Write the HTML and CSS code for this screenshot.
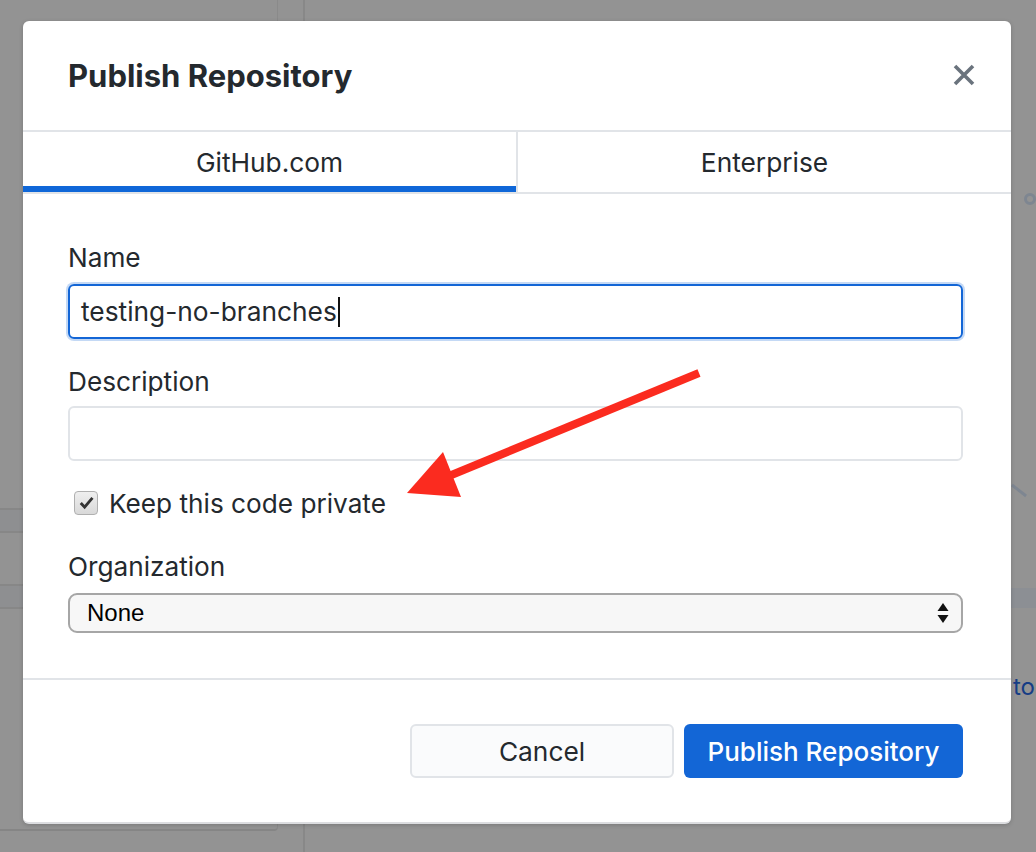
FILE: index.html
```html
<!DOCTYPE html>
<html lang="en">
<head>
<meta charset="utf-8">
<title>Publish Repository</title>
<link rel="stylesheet" href="styles.css">
</head>
<body>
<div class="app">
  <aside class="sidebar">
    <div class="side-panel">
      <div class="side-row"></div>
      <div class="side-gap"></div>
      <div class="side-row"></div>
    </div>
  </aside>
  <main class="main">
    <span class="ring"></span>
    <span class="dash"></span>
    <div class="band"></div>
    <div class="link-row">to</div>
  </main>
</div>

<div class="dialog">
  <header class="dialog-header">
    <h1 class="dialog-title">Publish Repository</h1>
    <button class="close" type="button" aria-label="Close">
      <svg viewBox="0 0 22 22" width="22" height="22"><path d="M2 2 L20 20 M20 2 L2 20" stroke="#6a737d" stroke-width="3.6" stroke-linecap="butt" fill="none"/></svg>
    </button>
  </header>

  <nav class="tabs">
    <div class="tab tab-active">GitHub.com</div>
    <div class="tab">Enterprise</div>
  </nav>

  <div class="form">
    <div class="field">
      <div class="label">Name</div>
      <div class="input input-focused"><span>testing-no-branches</span><span class="caret"></span></div>
    </div>
    <div class="field">
      <div class="label label-tight">Description</div>
      <div class="input"></div>
    </div>
    <div class="check-row">
      <span class="checkbox">
        <svg viewBox="0 0 16 16" width="17" height="17"><path d="M1.6 8.4 L3.6 6.6 L6.2 9.4 L12.6 1.8 L14.6 3.6 L6.3 13.4 Z" fill="#333333"/></svg>
      </span>
      <span class="check-label">Keep this code private</span>
    </div>
    <div class="field">
      <div class="label">Organization</div>
      <div class="select">
        <span>None</span>
        <svg viewBox="0 0 12 22" width="12" height="22"><path d="M6 1 L11.5 9 L0.5 9 Z M0.5 13 L11.5 13 L6 21 Z" fill="#111"/></svg>
      </div>
    </div>
  </div>

  <footer class="dialog-footer">
    <button class="btn btn-cancel" type="button">Cancel</button>
    <button class="btn btn-primary" type="button">Publish Repository</button>
  </footer>
</div>

<svg class="annotation" viewBox="0 0 1036 852" width="1036" height="852">
  <line x1="699" y1="373" x2="449" y2="476" stroke="#fb2b1f" stroke-width="8"/>
  <polygon points="407,493 443,452 461,497" fill="#fb2b1f"/>
</svg>
</body>
</html>
```

FILE: styles.css
```css
* { box-sizing: border-box; }

html, body {
  margin: 0;
  padding: 0;
  width: 1036px;
  height: 852px;
  overflow: hidden;
}

body {
  position: relative;
  background: #939393;
  font-family: Inter, "Open Sans", "Liberation Sans", sans-serif;
  color: #24292e;
}

/* ---------- dimmed app behind the modal ---------- */
.app {
  display: flex;
  height: 852px;
}

.sidebar {
  width: 305px;
  flex: none;
  border-right: 2px solid #888888;
}

.side-panel {
  width: 278px;
  height: 831px;
  padding-top: 508px;
  border-right: 1px solid #8a8a8a;
  border-bottom: 2px solid #858585;
  border-bottom-right-radius: 4px;
}

.side-row {
  height: 25px;
  background: #8e8f91;
  border-top: 2px solid #878787;
  border-bottom: 2px solid #878787;
}

.side-gap { height: 51px; }

.main {
  flex: 1;
  display: flex;
  flex-direction: column;
  align-items: flex-end;
  padding-top: 193px;
}

.ring {
  width: 12px;
  height: 12px;
  border: 3px solid #7e8691;
  border-radius: 50%;
}

.dash {
  width: 18px;
  height: 3px;
  background: #7e8691;
  transform: rotate(38deg);
  margin-top: 284px;
  margin-right: 8px;
}

.band {
  align-self: stretch;
  height: 20px;
  margin-top: 96px;
  background: #8c8f94;
}

.link-row {
  align-self: stretch;
  margin-top: 64px;
  padding-left: 708px;
  white-space: nowrap;
  font-size: 24px;
  color: #163d85;
}

/* ---------- modal ---------- */
.dialog {
  position: absolute;
  left: 23px;
  top: 21px;
  width: 988px;
  height: 803px;
  background: #ffffff;
  border-radius: 6px;
  border-bottom: 2px solid #dcdde0;
  box-shadow: 0 1px 4px rgba(0, 0, 0, 0.18);
  display: flex;
  flex-direction: column;
  overflow: hidden;
}

.dialog-header {
  height: 111px;
  flex: none;
  display: flex;
  align-items: center;
  justify-content: space-between;
  padding: 0 36px 0 45px;
  border-bottom: 2px solid #e1e4e8;
}

.dialog-title {
  margin: 0;
  font-size: 31px;
  font-weight: 700;
  color: #24292e;
}

.close {
  border: 0;
  background: none;
  padding: 0;
  width: 22px;
  height: 22px;
  display: flex;
  margin-top: -2px;
}

.tabs {
  display: flex;
  height: 62px;
  flex: none;
  border-bottom: 2px solid #e1e4e8;
}

.tab {
  flex: 1;
  display: flex;
  align-items: center;
  justify-content: center;
  font-size: 26.3px;
  color: #24292e;
}

.tab + .tab { border-left: 2px solid #e1e4e8; }

.tab-active {
  border-bottom: 6px solid #0f67d8;
  padding-top: 6px;
}

.form {
  flex: 1;
  display: flex;
  flex-direction: column;
  padding: 49px 48px 0 45px;
  border-bottom: 2px solid #e1e4e8;
}

.field { display: flex; flex-direction: column; }

.label {
  font-size: 26.2px;
  line-height: 30px;
  margin-bottom: 11px;
}

.label-tight { margin-bottom: 9px; }

.field + .field { margin-top: 28px; }

.input {
  height: 55px;
  border: 2px solid #e1e4e8;
  border-radius: 6px;
  display: flex;
  align-items: center;
  padding-left: 11px;
  font-size: 26.3px;
  color: #24292e;
}

.input-focused {
  border-color: #1366d6;
  box-shadow: 0 0 0 2px rgba(19, 102, 214, 0.25);
}

.caret {
  width: 2px;
  height: 30px;
  background: #111;
  margin-left: 1px;
}

.check-row {
  display: flex;
  align-items: center;
  margin-top: 28px;
  margin-left: 6px;
  height: 28px;
}

.checkbox {
  width: 24px;
  height: 24px;
  border-radius: 4px;
  border: 1px solid #b0b0b0;
  background: linear-gradient(#efefef, #d9d9d9);
  display: flex;
  align-items: center;
  justify-content: center;
}

.check-label {
  font-size: 26.2px;
  margin-left: 11px;
}

.check-row + .field { margin-top: 35px; }

.select {
  height: 40px;
  border: 2px solid #a6a6a6;
  border-radius: 9px;
  background: #f7f7f7;
  display: flex;
  align-items: center;
  justify-content: space-between;
  padding: 0 12px 0 17px;
  font-family: "Liberation Sans", Arial, sans-serif;
  font-size: 24px;
  color: #000;
}

.dialog-footer {
  height: 142px;
  flex: none;
  display: flex;
  justify-content: flex-end;
  align-items: flex-start;
  gap: 10px;
  padding: 44px 48px 0 0;
}

.btn {
  height: 54px;
  border-radius: 6px;
  font-family: Inter, "Open Sans", "Liberation Sans", sans-serif;
  font-size: 26.3px;
}

.btn-cancel {
  width: 264px;
  background: #fafbfc;
  border: 2px solid #e1e4e8;
  color: #24292e;
}

.btn-primary {
  width: 279px;
  background: #1366d6;
  border: 0;
  color: #ffffff;
  font-size: 26px;
  font-weight: 500;
}

/* ---------- annotation arrow drawn over the dialog ---------- */
.annotation {
  position: absolute;
  left: 0;
  top: 0;
  pointer-events: none;
}
```
